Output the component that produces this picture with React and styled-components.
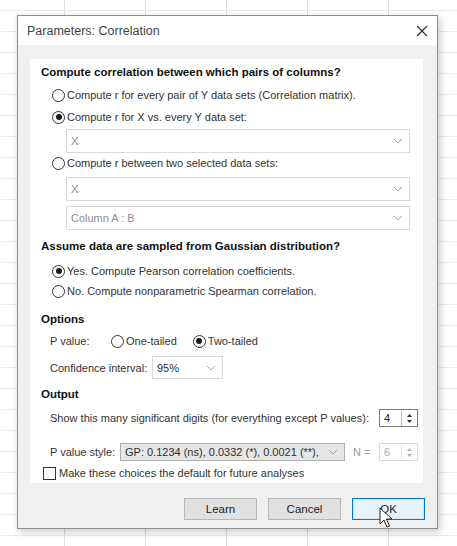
import React from "react"
import styled, { createGlobalStyle } from "styled-components"

const GlobalStyle = createGlobalStyle`
  body {
    margin: 0;
    font-family: "Liberation Sans", Arial, sans-serif;
  }
`

const Desktop = styled.div`
  width: 457px;
  height: 546px;
  box-sizing: border-box;
  padding: 15px 0 0 17px;
  overflow: hidden;
  background-color: #fff;
  background-image:
    linear-gradient(to right, #dedede 1px, transparent 1px),
    linear-gradient(to bottom, #ececec 1px, transparent 1px);
  background-size: 81px 100%, 100% 21px;
  background-position: 64px 0, 0 10px;
`

const Dialog = styled.div`
  position: relative;
  width: 421px;
  height: 514px;
  box-sizing: border-box;
  border: 1px solid #8c8c8c;
  background: #f0f0f0;
  box-shadow: 2px 3px 8px rgba(0, 0, 0, 0.22);
  display: flex;
  flex-direction: column;
`

const TitleBar = styled.div`
  height: 29px;
  flex: none;
  background: #fff;
  display: flex;
  align-items: center;
  justify-content: space-between;
  padding: 0 9px 0 9px;
`

const Title = styled.span`
  font-size: 12.5px;
  color: #444;
`

const Body = styled.div`
  padding: 14px 14px 0 12px;
`

const Panel = styled.div`
  height: 424px;
  box-sizing: border-box;
  background: #fff;
  padding: 4px 13px 0 11px;
  display: flex;
  flex-direction: column;
`

const Heading = styled.div`
  height: 18px;
  line-height: 18px;
  margin-top: ${(p) => p.$mt || 0}px;
  font-size: 11.5px;
  font-weight: bold;
  color: #111;
`

const Row = styled.div`
  display: flex;
  align-items: center;
  height: ${(p) => p.$h || 18}px;
  margin-top: ${(p) => p.$mt || 0}px;
  padding-left: ${(p) => p.$indent || 0}px;
  font-size: 11px;
  color: #333;
`

const Label = styled.span`
  width: ${(p) => (p.$w ? `${p.$w}px` : "auto")};
  margin-left: ${(p) => p.$ml || 0}px;
  flex: none;
  color: ${(p) => (p.$muted ? "#9a9a9a" : "inherit")};
`

const RadioItem = styled.label`
  display: flex;
  align-items: center;
  gap: 2px;
  margin-right: ${(p) => p.$mr || 0}px;
`

const Circle = styled.span`
  width: 11px;
  height: 11px;
  flex: none;
  border: 1px solid #333;
  border-radius: 50%;
  background: #fff;
  display: flex;
  align-items: center;
  justify-content: center;

  &::after {
    content: "";
    width: 6px;
    height: 6px;
    border-radius: 50%;
    background: ${(p) => (p.$on ? "#1c1c1c" : "transparent")};
  }
`

const Box = styled.span`
  width: 11px;
  height: 11px;
  flex: none;
  border: 1px solid #333;
  background: #fff;
  margin-right: 3px;
`

const Select = styled.div`
  width: ${(p) => p.$w}px;
  height: ${(p) => p.$h || 24}px;
  box-sizing: border-box;
  margin-top: ${(p) => p.$mt || 0}px;
  margin-left: ${(p) => p.$ml || 0}px;
  flex: none;
  border: 1px solid ${(p) => (p.$gray ? "#adadad" : "#d9d9d9")};
  background: ${(p) => (p.$gray ? "#e6e6e6" : "#fff")};
  display: flex;
  align-items: center;
  justify-content: space-between;
  padding: 0 6px 0 4px;
  font-size: 11px;
  color: ${(p) => (p.$dark ? "#2e2e2e" : "#8e8e8e")};
  white-space: nowrap;
  overflow: hidden;
`

const Spinner = styled.div`
  width: 39px;
  height: 18px;
  box-sizing: border-box;
  margin-left: auto;
  margin-right: -8px;
  flex: none;
  border: 1px solid ${(p) => (p.$off ? "#dcdcdc" : "#7a7a7a")};
  background: #fff;
  display: flex;
  font-size: 11px;
  color: ${(p) => (p.$off ? "#a8a8a8" : "#222")};
`

const SpinValue = styled.span`
  flex: 1;
  padding-left: 4px;
  line-height: 16px;
`

const SpinArrows = styled.span`
  width: 15px;
  border-left: 1px solid ${(p) => (p.$off ? "#e2e2e2" : "#bcbcbc")};
  display: flex;
  flex-direction: column;
  align-items: center;
  justify-content: center;
  gap: 3px;
`

const Footer = styled.div`
  display: flex;
  justify-content: flex-end;
  gap: 11px;
  margin-top: 15px;
  padding-right: 12px;
`

const Button = styled.button`
  width: 73px;
  height: 22px;
  box-sizing: border-box;
  border: 1px solid ${(p) => (p.$primary ? "#0078d7" : "#b8b8b8")};
  background: ${(p) => (p.$primary ? "#e8f2fb" : "#e1e1e1")};
  box-shadow: ${(p) => (p.$primary ? "inset 0 0 0 1px #cfe4f7" : "none")};
  font-family: inherit;
  font-size: 11.5px;
  color: #222;
  padding: 0;
`

const Cursor = styled.svg`
  position: absolute;
  left: 361px;
  top: 491px;
`

const Chevron = () => (
  <svg width="10" height="6" viewBox="0 0 10 6">
    <polyline points="1,1 5,5 9,1" fill="none" stroke="#a8a8a8" strokeWidth="1" />
  </svg>
)

const Arrow = ({ up, color }) => (
  <svg width="5" height="3" viewBox="0 0 5 3">
    <polygon points={up ? "0,3 5,3 2.5,0" : "0,0 5,0 2.5,3"} fill={color} />
  </svg>
)

const Radio = ({ on, children, mr }) => (
  <RadioItem $mr={mr}>
    <Circle $on={on} />
    <span>{children}</span>
  </RadioItem>
)

export default function App() {
  return (
    <>
      <GlobalStyle />
      <Desktop>
        <Dialog>
          <TitleBar>
            <Title>Parameters: Correlation</Title>
            <svg width="12" height="12" viewBox="0 0 12 12">
              <path d="M1 1 L11 11 M11 1 L1 11" stroke="#333" strokeWidth="1.2" />
            </svg>
          </TitleBar>
          <Body>
            <Panel>
              <Heading>Compute correlation between which pairs of columns?</Heading>
              <Row $mt={5} $indent={11}>
                <Radio>Compute r for every pair of Y data sets (Correlation matrix).</Radio>
              </Row>
              <Row $mt={4} $indent={11}>
                <Radio on>Compute r for X vs. every Y data set:</Radio>
              </Row>
              <Select $w={344} $ml={25} $mt={3}>
                X <Chevron />
              </Select>
              <Row $mt={1} $indent={11}>
                <Radio>Compute r between two selected data sets:</Radio>
              </Row>
              <Select $w={344} $ml={25} $mt={5}>
                X <Chevron />
              </Select>
              <Select $w={344} $ml={25} $mt={5}>
                Column A : B <Chevron />
              </Select>
              <Heading $mt={7}>Assume data are sampled from Gaussian distribution?</Heading>
              <Row $mt={7} $indent={11}>
                <Radio on>Yes. Compute Pearson correlation coefficients.</Radio>
              </Row>
              <Row $mt={2} $indent={11}>
                <Radio>No. Compute nonparametric Spearman correlation.</Radio>
              </Row>
              <Heading $mt={10}>Options</Heading>
              <Row $mt={4} $indent={9}>
                <Label $w={61}>P value:</Label>
                <Radio mr={16}>One-tailed</Radio>
                <Radio on>Two-tailed</Radio>
              </Row>
              <Row $mt={6} $h={23} $indent={9}>
                <Label $w={102}>Confidence interval:</Label>
                <Select $w={71} $h={23} $dark>
                  95% <Chevron />
                </Select>
              </Row>
              <Heading $mt={6}>Output</Heading>
              <Row $mt={6} $indent={9}>
                <Label>Show this many significant digits (for everything except P values):</Label>
                <Spinner>
                  <SpinValue>4</SpinValue>
                  <SpinArrows>
                    <Arrow up color="#333" />
                    <Arrow color="#333" />
                  </SpinArrows>
                </Spinner>
              </Row>
              <Row $mt={16} $indent={9}>
                <Label $w={70}>P value style:</Label>
                <Select $w={225} $h={18} $gray $dark>
                  GP: 0.1234 (ns), 0.0332 (*), 0.0021 (**), <Chevron />
                </Select>
                <Label $muted $ml={8}>N =</Label>
                <Spinner $off>
                  <SpinValue>6</SpinValue>
                  <SpinArrows $off>
                    <Arrow up color="#b0b0b0" />
                    <Arrow color="#b0b0b0" />
                  </SpinArrows>
                </Spinner>
              </Row>
              <Row $mt={4} $h={16} $indent={2}>
                <Box />
                <Label>Make these choices the default for future analyses</Label>
              </Row>
            </Panel>
          </Body>
          <Footer>
            <Button>Learn</Button>
            <Button>Cancel</Button>
            <Button $primary>OK</Button>
          </Footer>
          <Cursor width="14" height="22" viewBox="0 0 14 22">
            <path
              d="M1 1 L1 17 L5 13 L8 20 L10.5 19 L7.5 12 L13 12 Z"
              fill="#fff"
              stroke="#222"
              strokeWidth="1"
              strokeLinejoin="round"
            />
          </Cursor>
        </Dialog>
      </Desktop>
    </>
  )
}
